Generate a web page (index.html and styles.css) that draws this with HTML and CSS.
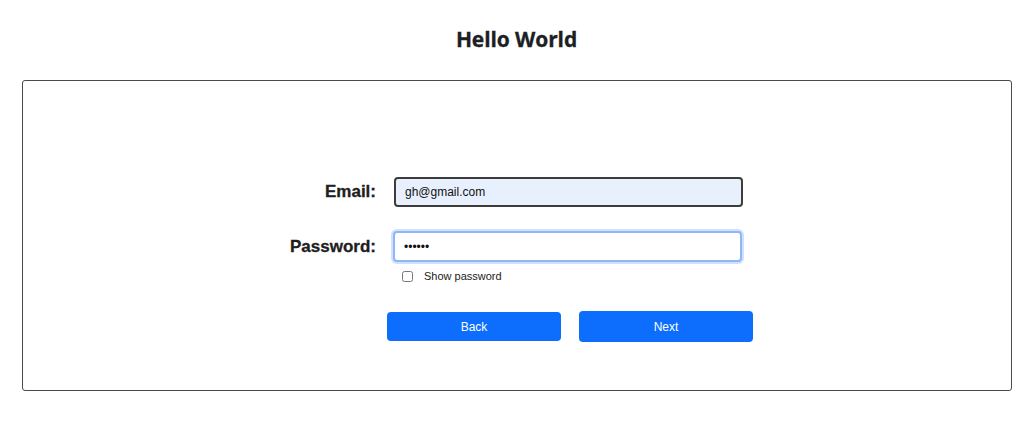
FILE: index.html
```html
<!DOCTYPE html>
<html lang="en">
<head>
<meta charset="utf-8">
<title>Hello World</title>
<link rel="stylesheet" href="styles.css">
</head>
<body>
<h1 class="title">Hello World</h1>
<div class="card">
  <form class="form">
    <label class="label" for="email">Email:</label>
    <input class="input input-email" id="email" type="email" value="gh@gmail.com">
    <label class="label label-pw" for="pw">Password:</label>
    <div class="pw-col">
      <input class="input input-pw" id="pw" type="password" value="123456">
      <label class="show"><input type="checkbox" class="check"><span>Show password</span></label>
    </div>
    <div class="buttons">
      <button type="button" class="btn btn-back">Back</button>
      <button type="button" class="btn btn-next">Next</button>
    </div>
  </form>
</div>
</body>
</html>
```

FILE: styles.css
```css
html, body {
  margin: 0;
  background: #fff;
  font-family: "Liberation Sans", Arial, sans-serif;
  color: #212529;
}
.title {
  margin: 0;
  padding-top: 25px;
  text-align: center;
  font-family: "Open Sans", "Noto Sans", sans-serif;
  font-weight: 700;
  font-size: 21px;
  line-height: 28px;
  color: #1c1f23;
  letter-spacing: -0.1px;
  -webkit-text-stroke: 0.3px #1c1f23;
}
.card {
  margin: 27px 21px 0 22px;
  height: 309px;
  border: 1px solid #4a4a4a;
  border-radius: 3px;
}
.form {
  display: grid;
  grid-template-columns: 110px 349px;
  column-gap: 18px;
  padding: 96px 0 0 243px;
}
.label {
  text-align: right;
  font-weight: 700;
  font-size: 17px;
  line-height: 30px;
  color: #1e1e1e;
  -webkit-text-stroke: 0.3px #1e1e1e;
}
.label-pw {
  margin-top: 24px;
  line-height: 31px;
}
.input {
  box-sizing: border-box;
  width: 349px;
  height: 30px;
  margin: 0;
  padding: 0 9px;
  font-family: "Liberation Sans", Arial, sans-serif;
  font-size: 12px;
  color: #111;
  border-radius: 4px;
  outline: none;
}
.input-email {
  border: 2px solid #3c3c3c;
  background: #e8f0fe;
}
.pw-col {
  margin-top: 24px;
  margin-left: -1px;
  display: flex;
  flex-direction: column;
}
.input-pw {
  height: 31px;
  border: 2px solid #8fb7f5;
  background: #fff;
  box-shadow: 0 0 0 2px #cfe1fc;
  letter-spacing: 0;
}
.show {
  display: flex;
  align-items: center;
  margin: 8px 0 0 9px;
  font-size: 11px;
  color: #222;
}
.check {
  margin: 0 11px 0 0;
  width: 11px;
  height: 11px;
}
.buttons {
  grid-column: 2;
  display: flex;
  align-items: center;
  gap: 18px;
  margin: 29px 0 0 -7px;
}
.btn {
  flex: none;
  width: 174px;
  height: 29px;
  border: none;
  border-radius: 4px;
  background: #0d6efd;
  color: #fff;
  font-family: "Liberation Sans", Arial, sans-serif;
  font-size: 12px;
  padding: 0;
}
.btn-next {
  height: 31px;
}
```
